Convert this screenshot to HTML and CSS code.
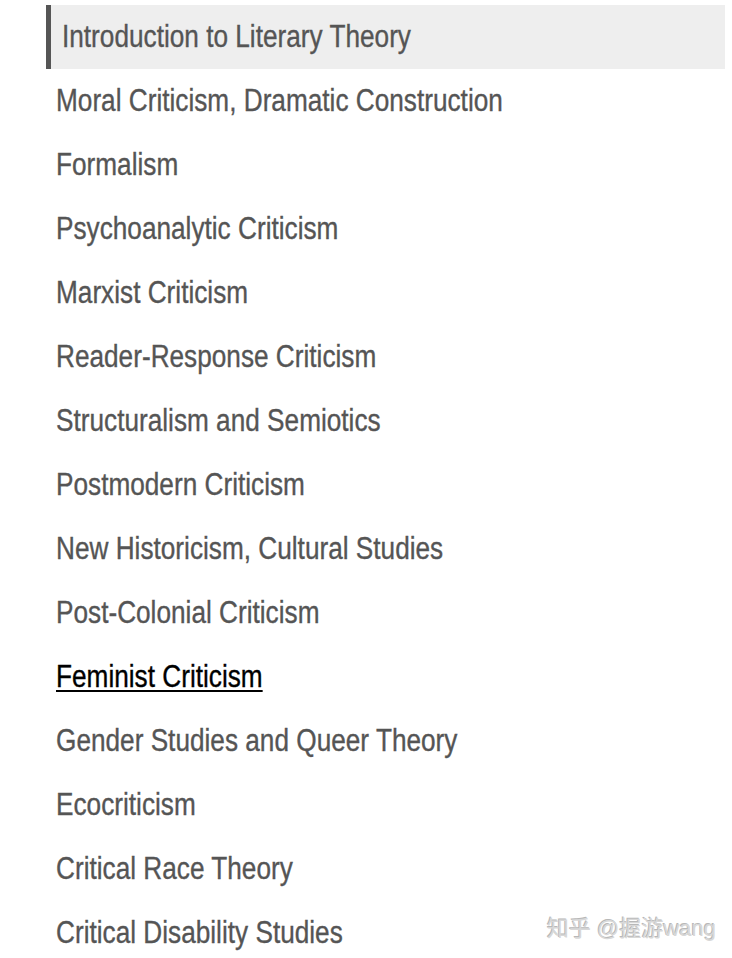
FILE: index.html
```html
<!DOCTYPE html>
<html>
<head>
<meta charset="utf-8">
<link rel="stylesheet" href="styles.css">
</head>
<body>
<ul class="menu">
  <li class="item active"><span class="label">Introduction to Literary Theory</span></li>
  <li class="item"><span class="label">Moral Criticism, Dramatic Construction</span></li>
  <li class="item"><span class="label">Formalism</span></li>
  <li class="item"><span class="label">Psychoanalytic Criticism</span></li>
  <li class="item"><span class="label">Marxist Criticism</span></li>
  <li class="item"><span class="label">Reader-Response Criticism</span></li>
  <li class="item"><span class="label">Structuralism and Semiotics</span></li>
  <li class="item"><span class="label">Postmodern Criticism</span></li>
  <li class="item"><span class="label">New Historicism, Cultural Studies</span></li>
  <li class="item"><span class="label">Post-Colonial Criticism</span></li>
  <li class="item link"><span class="label">Feminist Criticism</span></li>
  <li class="item"><span class="label">Gender Studies and Queer Theory</span></li>
  <li class="item"><span class="label">Ecocriticism</span></li>
  <li class="item"><span class="label">Critical Race Theory</span></li>
  <li class="item"><span class="label">Critical Disability Studies</span></li>
</ul>
<div class="watermark">知乎 @握游wang</div>
</body>
</html>
```
FILE: styles.css
```css
html, body {
  margin: 0;
  padding: 0;
  background: #fff;
}
body {
  width: 732px;
  height: 958px;
  overflow: hidden;
  position: relative;
}
.menu {
  list-style: none;
  margin: 0;
  padding: 5px 7px 0 46px;
  display: flex;
  flex-direction: column;
}
.item {
  height: 64px;
  line-height: 64px;
  padding-left: 10px;
  font-family: "Liberation Sans", Arial, sans-serif;
  font-size: 31px;
  color: #555;
  white-space: nowrap;
}
.label {
  display: inline-block;
  transform: scaleX(0.845);
  transform-origin: left center;
  -webkit-text-stroke: 0.35px currentColor;
}
.active {
  background: #eeeeee;
  border-left: 5px solid #555;
  padding-left: 11px;
}
.link {
  color: #000;
}
.link .label {
  text-decoration: underline;
  text-underline-offset: 3px;
  text-decoration-thickness: 2px;
}
.watermark {
  position: absolute;
  left: 547px;
  top: 910px;
  font-family: "Liberation Sans", "Noto Sans CJK SC", sans-serif;
  font-size: 22px;
  color: #d8d8d8;
  text-shadow: -1px -1px 0 #b8b8b8, 1px 1px 0 #ffffff;
}
```
